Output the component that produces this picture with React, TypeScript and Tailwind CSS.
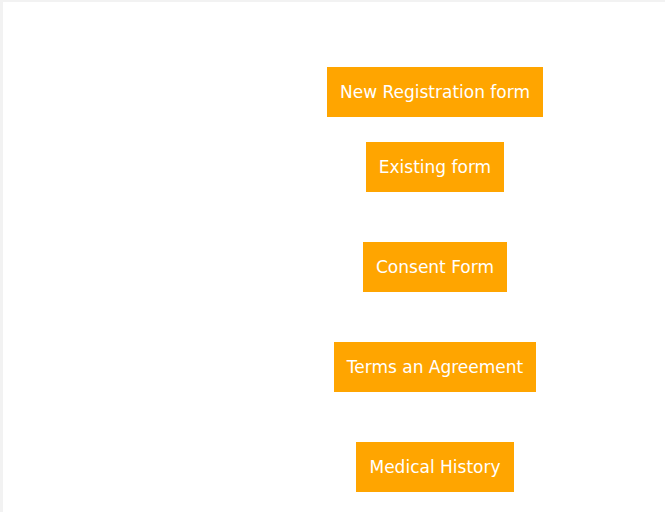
export default function App() {
  const buttons = [
    { label: "New Registration form", mt: "mt-[65px]" },
    { label: "Existing form", mt: "mt-[25px]" },
    { label: "Consent Form", mt: "mt-[50px]" },
    { label: "Terms an Agreement", mt: "mt-[50px]" },
    { label: "Medical History", mt: "mt-[50px]" },
  ];

  return (
    <div className="flex h-[512px] w-[665px] overflow-hidden border-l-[3px] border-t-2 border-[#f2f2f2] bg-white font-['DejaVu_Sans',sans-serif]">
      <div className="w-[202px] shrink-0" />
      <div className="flex flex-1 flex-col items-center">
        {buttons.map((b) => (
          <button
            key={b.label}
            className={`${b.mt} flex h-[50px] items-center bg-[#ffa500] px-[13px] pt-[2px] text-[17px] text-white`}
          >
            {b.label}
          </button>
        ))}
      </div>
    </div>
  );
}
